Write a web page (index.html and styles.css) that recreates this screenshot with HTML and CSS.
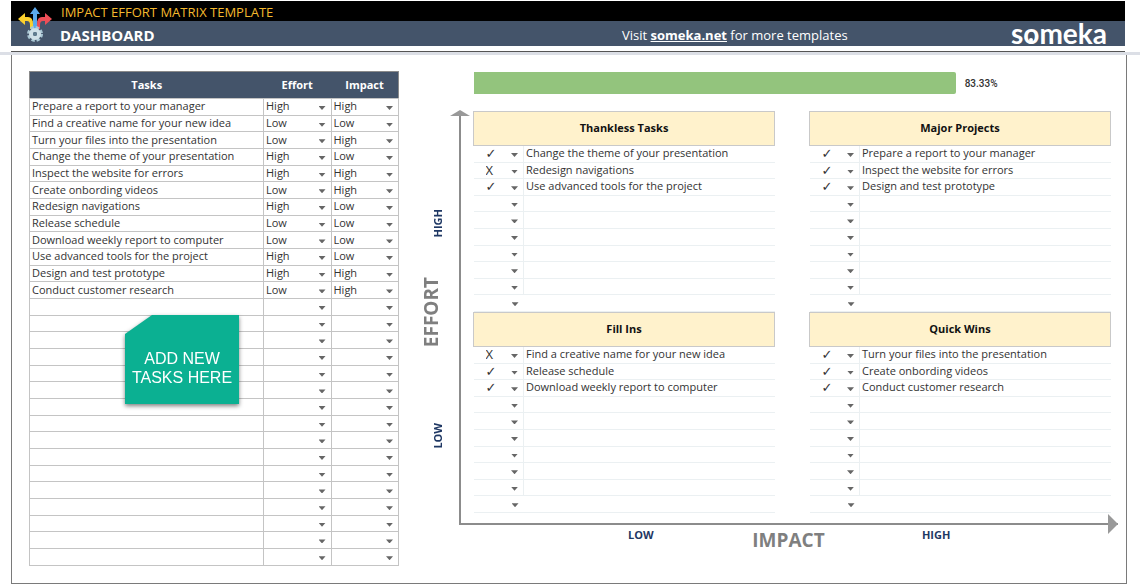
FILE: index.html
```
<!DOCTYPE html>
<html lang="en">
<head>
    <meta charset="UTF-8">
    <meta name="viewport" content="width=device-width, initial-scale=1.0">
    <title>Impact Effort Matrix Template</title>
    <link rel="stylesheet" href="styles.css">
</head>
<body>
    <header class="header">
        <div class="title-bar">IMPACT EFFORT MATRIX TEMPLATE</div>
        <div class="nav-bar">
            <h1>DASHBOARD</h1>
            <p>Visit <a href="#">someka.net</a> for more templates</p>
            <div class="logo">s<span class="logo-o">o</span>meka</div>
        </div>
        <svg class="header-icon" viewBox="0 0 34 36" aria-hidden="true">
            <path d="M15 22V8h-3l5-7 5 7h-3v14z" fill="#5aa9ec"/>
            <path d="M12 23v-4q0-4-3-4H7v4l-7-6 7-6v4h3q5 0 5 7v5z" fill="#fbd02d"/>
            <path d="M22 23v-4q0-4 3-4h2v4l7-6-7-6v4h-3q-5 0-5 7v5z" fill="#ee4e57"/>
            <circle cx="17" cy="28" r="6" fill="none" stroke="#a9c6d3" stroke-width="4" stroke-dasharray="3 1.7"/>
            <circle cx="17" cy="28" r="4" fill="none" stroke="#cfe0e8" stroke-width="4"/>
            <circle cx="17" cy="28" r="2" fill="#5f7d90"/>
        </svg>
    </header>
    <div class="freeze-line"></div>

    <main class="sheet">
        <section class="tasks">
            <table class="task-table">
                <thead>
                    <tr>
                        <th class="col-task">Tasks</th>
                        <th>Effort</th>
                        <th>Impact</th>
                    </tr>
                </thead>
                <tbody id="task-body"></tbody>
            </table>
            <div class="note"><div class="note-shape">ADD NEW<br>TASKS HERE</div></div>
        </section>

        <section class="matrix">
            <div class="progress">
                <div class="progress-bar" style="width: 83.33%"></div>
                <span>83.33%</span>
            </div>

            <div class="y-labels">
                <span class="level">HIGH</span>
                <span class="axis-name">EFFORT</span>
                <span class="level">LOW</span>
            </div>
            <div class="y-axis"></div>

            <div class="quadrants">
                <table class="quadrant" id="thankless">
                    <colgroup><col class="col-status"><col></colgroup>
                    <thead><tr><th colspan="2">Thankless Tasks</th></tr></thead>
                    <tbody></tbody>
                </table>
                <table class="quadrant" id="major">
                    <colgroup><col class="col-status"><col></colgroup>
                    <thead><tr><th colspan="2">Major Projects</th></tr></thead>
                    <tbody></tbody>
                </table>
                <table class="quadrant" id="fillins">
                    <colgroup><col class="col-status"><col></colgroup>
                    <thead><tr><th colspan="2">Fill Ins</th></tr></thead>
                    <tbody></tbody>
                </table>
                <table class="quadrant" id="quickwins">
                    <colgroup><col class="col-status"><col></colgroup>
                    <thead><tr><th colspan="2">Quick Wins</th></tr></thead>
                    <tbody></tbody>
                </table>
            </div>

            <div class="x-axis"></div>
            <div class="x-labels">
                <span class="level">LOW</span>
                <span class="axis-name">IMPACT</span>
                <span class="level">HIGH</span>
            </div>
        </section>
    </main>

    <script src="script.js"></script>
</body>
</html>
```
FILE: styles.css
```
* {
    box-sizing: border-box;
}

body {
    margin: 0;
    padding-top: 1px;
    min-height: 100vh;
    display: flex;
    flex-direction: column;
    background: white;
    color: #333;
    font-family: "Open Sans", "Noto Sans", sans-serif;
    font-size: 11px;
}

/* header */
.header {
    position: relative;
    margin: 0 15px 0 11px;
    padding-bottom: 5px;
    border-bottom: 1px solid #555;
}

.title-bar {
    height: 20px;
    line-height: 22px;
    padding-left: 50px;
    background: black;
    color: #f5b92e;
    font-size: 13px;
}

.nav-bar {
    display: grid;
    grid-template-columns: 562fr 389fr auto;
    height: 25px;
    line-height: 28px;
    padding: 0 18px 0 49px;
    background: #44546a;
    color: white;
}

.nav-bar h1 {
    margin: 0;
    font-size: 15px;
}

.nav-bar p {
    margin: 0;
    font-size: 13px;
}

.nav-bar a {
    color: white;
    font-weight: bold;
}

.logo {
    font-family: Lato, sans-serif;
    font-size: 28px;
    line-height: 24px;
    font-weight: bold;
}

.logo-o {
    position: relative;
}

.logo-o::after {
    content: "";
    position: absolute;
    left: 6px;
    bottom: 8px;
    width: 4px;
    height: 4px;
    border-radius: 2px;
    background: white;
}

.header-icon {
    position: absolute;
    left: 7px;
    top: 5px;
    width: 34px;
    height: 36px;
}

.freeze-line {
    height: 3px;
    background: #dcdfe6;
}

/* sheet */
.sheet {
    flex: 1;
    display: grid;
    grid-template-columns: 370fr 701fr;
    gap: 18px;
    margin: 0 13px 1px 11px;
    padding: 16px 8px 17px 17px;
    border: 1px solid #7a7a7a;
    border-top: none;
}

table {
    width: 100%;
    height: 100%;
    table-layout: fixed;
    border-collapse: collapse;
}

th, td {
    padding: 0 0 1px;
    text-align: left;
    line-height: 14px;
    white-space: nowrap;
}

.pick {
    position: relative;
}

.pick::after {
    content: "";
    position: absolute;
    right: 5px;
    top: 7px;
    width: 7px;
    height: 4px;
    background: #666;
    clip-path: polygon(0 0, 100% 0, 50% 100%);
    pointer-events: none;
}

select {
    display: block;
    width: 100%;
    height: 14px;
    padding: 0 2px;
    border: none;
    background: transparent;
    appearance: none;
    color: inherit;
    font: inherit;
    line-height: 14px;
}

/* task list */
.tasks {
    position: relative;
}

.task-table {
    border: 1px solid #8a8a8a;
}

.task-table th {
    height: 27px;
    background: #44546a;
    color: white;
    text-align: center;
}

.task-table .col-task {
    width: 234px;
}

.task-table td {
    border: 1px solid #c4c4c4;
}

.task-table td:first-child {
    padding-left: 2px;
}

.note {
    position: absolute;
    left: 96px;
    top: 244px;
    filter: drop-shadow(0 2px 2px rgba(0, 0, 0, 0.5));
}

.note-shape {
    width: 114px;
    height: 89px;
    padding-top: 34px;
    background: #0bb092;
    clip-path: polygon(27px 0, 100% 0, 100% 100%, 0 100%, 0 19px);
    color: white;
    font-family: "Liberation Sans", Arial, sans-serif;
    font-size: 16px;
    line-height: 19px;
    text-align: center;
    white-space: nowrap;
}

/* matrix */
.matrix {
    display: grid;
    grid-template-columns: 30px 20px 1fr;
    grid-template-rows: 40px 1fr 2px 41px;
    column-gap: 3px;
}

.progress {
    grid-column: 3;
    display: flex;
    align-items: center;
    height: 24px;
    margin-right: 66px;
    padding-left: 1px;
    font-family: Roboto, sans-serif;
    font-size: 10px;
    font-weight: 500;
}

.progress-bar {
    flex-shrink: 0;
    height: 22px;
    margin-right: 9px;
    border-radius: 0 2px 2px 0;
    background: #93c47d;
}

.y-labels {
    grid-column: 1;
    grid-row: 2;
    display: grid;
    grid-template-rows: 88fr 88fr 158fr;
    align-items: center;
    padding: 68px 0 8px;
}

.y-labels span {
    writing-mode: vertical-rl;
    transform: rotate(180deg);
    justify-self: start;
}

.y-labels .level {
    justify-self: end;
}

.level {
    color: #1f3864;
    font-weight: bold;
    line-height: 18px;
}

.axis-name {
    color: #7f7f7f;
    font-size: 19px;
    font-weight: bold;
    line-height: 28px;
}

.y-axis {
    grid-column: 2;
    grid-row: 2;
    position: relative;
    margin: 0 9px;
    background: #8c8c8c;
}

.y-axis::before {
    content: "";
    position: absolute;
    left: -9px;
    top: -1px;
    width: 20px;
    height: 6px;
    background: #999;
    clip-path: polygon(0 100%, 50% 0, 100% 100%);
}

.x-axis {
    grid-column: 2 / -1;
    position: relative;
    margin-left: 9px;
    background: #8c8c8c;
}

.x-axis::after {
    content: "";
    position: absolute;
    right: 0;
    top: -9px;
    width: 10px;
    height: 20px;
    background: #999;
    clip-path: polygon(0 0, 100% 50%, 0 100%);
}

.x-labels {
    grid-column: 2 / -1;
    display: grid;
    grid-template-columns: 1fr 1fr 1fr;
    align-items: start;
    margin-left: 9px;
    padding: 1px 108px 0;
    text-align: center;
}

.quadrants {
    grid-column: 3;
    grid-row: 2;
    display: grid;
    grid-template-columns: 1fr 1fr;
    grid-template-rows: 1fr 1fr;
    column-gap: 34px;
    margin: 0 7px 10px 0;
}

.quadrant th {
    height: 34px;
    border: 1px solid #c9c9c9;
    background: #fff2cc;
    color: #111;
    text-align: center;
}

.quadrant td {
    border-bottom: 1px solid #ebf0f2;
    padding-left: 2px;
}

.quadrant .col-status {
    width: 50px;
}

.quadrant .pick {
    padding-left: 0;
    border-right: 1px solid #ebf0f2;
}

.quadrant tr:last-child .pick {
    border-right: none;
}

.quadrant select {
    padding: 0 0 0 12px;
    font-family: "Open Sans", "DejaVu Sans", sans-serif;
    font-size: 13px;
}
```
FILE: script.js
```
const tasks = [
    ["Prepare a report to your manager", "High", "High", "✓"],
    ["Find a creative name for your new idea", "Low", "Low", "X"],
    ["Turn your files into the presentation", "Low", "High", "✓"],
    ["Change the theme of your presentation", "High", "Low", "✓"],
    ["Inspect the website for errors", "High", "High", "✓"],
    ["Create onbording videos", "Low", "High", "✓"],
    ["Redesign navigations", "High", "Low", "X"],
    ["Release schedule", "Low", "Low", "✓"],
    ["Download weekly report to computer", "Low", "Low", "✓"],
    ["Use advanced tools for the project", "High", "Low", "✓"],
    ["Design and test prototype", "High", "High", "✓"],
    ["Conduct customer research", "Low", "High", "✓"]
];

function pick(label, options, value) {
    let items = options.map(o => `<option${o === value ? " selected" : ""}>${o}</option>`);
    return `<td class="pick"><select aria-label="${label}">${items.join("")}</select></td>`;
}

function fillTasks() {
    let html = "";
    for (let i = 0; i < 28; i++) {
        let [name, effort, impact] = tasks[i] || ["", "", ""];
        html += `<tr><td>${name}</td>
            ${pick("Effort", ["", "Low", "High"], effort)}
            ${pick("Impact", ["", "Low", "High"], impact)}</tr>`;
    }
    document.querySelector("#task-body").innerHTML = html;
}

function fillQuadrant(id, effort, impact) {
    let list = tasks.filter(t => t[1] === effort && t[2] === impact);
    let html = "";
    for (let i = 0; i < 10; i++) {
        let task = list[i] || ["", "", "", ""];
        html += `<tr>${pick("Status", ["", "✓", "X"], task[3])}<td>${task[0]}</td></tr>`;
    }
    document.querySelector(`#${id} tbody`).innerHTML = html;
}

fillTasks();
fillQuadrant("thankless", "High", "Low");
fillQuadrant("major", "High", "High");
fillQuadrant("fillins", "Low", "Low");
fillQuadrant("quickwins", "Low", "High");
```
